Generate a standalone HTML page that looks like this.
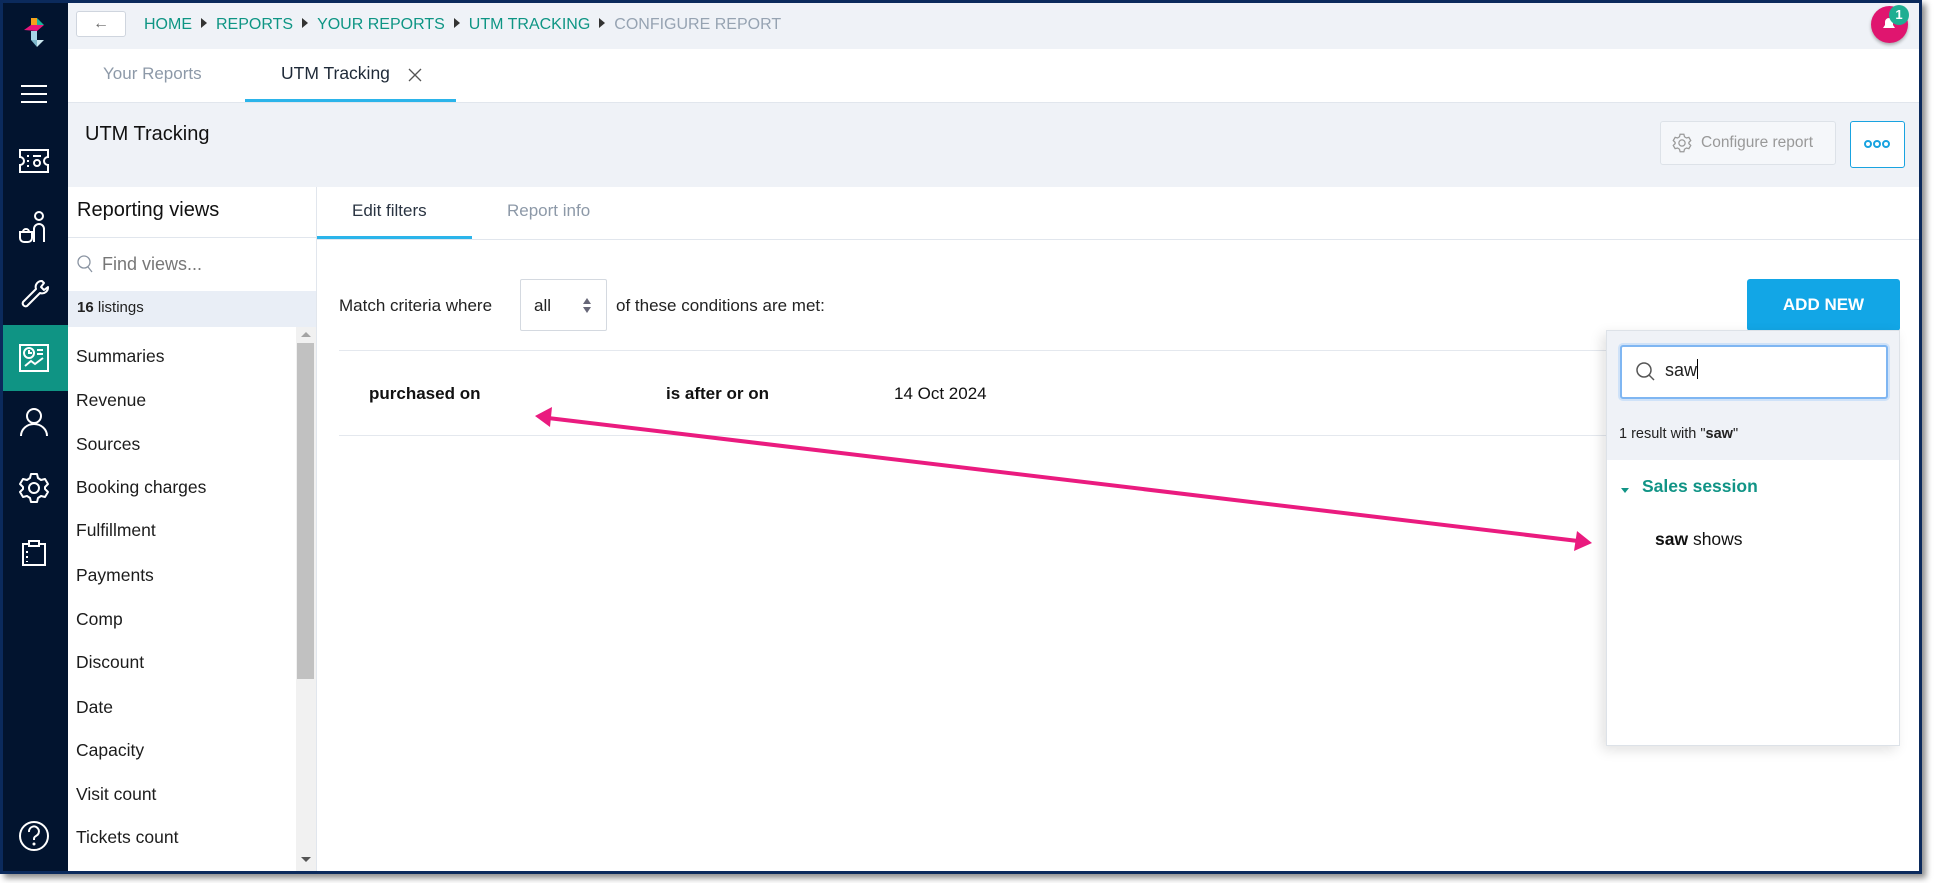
<!DOCTYPE html>
<html><head><meta charset="utf-8">
<style>
*{box-sizing:border-box;margin:0;padding:0}
body{width:1934px;height:883px;background:#fff;font-family:"Liberation Sans",sans-serif;position:relative;overflow:hidden;color:#1c1c1c}
.a{position:absolute}
.frame{left:0;top:0;width:1922px;height:874px;box-shadow:4px 4px 6px rgba(0,0,0,.45);overflow:hidden;background:#fff}
.bord{left:0;top:0;width:1922px;height:874px;border:3px solid #0b2a5c;pointer-events:none}
.side{left:0;top:0;width:68px;height:874px;background:#02142f}
.ic{position:absolute;left:0;width:68px;display:flex;justify-content:center;align-items:center}
.bc{left:68px;top:0;width:1860px;height:49px;background:#eff2f7}
.crumb{font-size:16px;color:#0e9584;top:16px}
.tri{display:inline-block;width:0;height:0;border-left:6px solid #333;border-top:5px solid transparent;border-bottom:5px solid transparent;margin:0 9px 1px}
.list div{position:absolute;left:76px;font-size:17.5px;color:#1c1c1c}
</style></head><body>
<div class="a frame">
<div class="a side">
  <svg class="a" style="left:22px;top:16px" width="24" height="32" viewBox="0 0 24 32">
    <polygon points="9,2 15,2 15,9 9,9" fill="#f6a21b"/><polygon points="15,2 22,9 15,9" fill="#17b79b"/>
    <polygon points="2,14 9,9 22,9 15,15" fill="#e8157a"/><polygon points="9,15 15,15 15,24 9,24" fill="#a7d3e6"/>
    <polygon points="15,24 22,24 15,31" fill="#cce8f0"/><polygon points="9,24 15,24 15,31" fill="#7fb9cc"/>
  </svg>
  <div class="ic" style="top:83px;height:22px"><svg width="28" height="20"><path d="M1 2h26M1 10h26M1 18h26" stroke="#fff" stroke-width="2"/></svg></div>
  <div class="ic" style="top:147px;height:28px"><svg width="32" height="26"><path d="M2 2h28v7a4 4 0 0 0 0 8v7H2v-7a4 4 0 0 0 0-8z" fill="none" stroke="#fff" stroke-width="2"/><path d="M10 7v2M10 12v2M10 17v2M15 8h8" stroke="#fff" stroke-width="2"/><circle cx="19" cy="15" r="3" fill="none" stroke="#fff" stroke-width="2"/></svg></div>
  <div class="ic" style="top:210px;height:34px"><svg width="32" height="34"><circle cx="21" cy="6" r="4" fill="none" stroke="#fff" stroke-width="2"/><path d="M16 32V19a5 5 0 0 1 10 0v13M2 22h12v6a4 4 0 0 1-4 4H6a4 4 0 0 1-4-4zM5 22a3 3 0 0 1 6 0" fill="none" stroke="#fff" stroke-width="2"/></svg></div>
  <div class="ic" style="top:278px;height:32px"><svg width="32" height="32"><path d="M24 3a6 6 0 0 0-6 8L5 24a3 3 0 0 0 4 4l13-13a6 6 0 0 0 8-6l-4 3-3-3 3-4z" fill="none" stroke="#fff" stroke-width="2" stroke-linejoin="round"/></svg></div>
  <div class="ic" style="top:325px;height:66px;background:#0f9484"><svg width="32" height="28"><rect x="2" y="1" width="28" height="26" fill="none" stroke="#fff" stroke-width="2"/><circle cx="11" cy="9" r="5" fill="none" stroke="#fff" stroke-width="2"/><path d="M11 6v3h3M19 6h6M19 10h6M7 22l6-5 4 3 8-6" fill="none" stroke="#fff" stroke-width="2"/></svg></div>
  <div class="ic" style="top:406px;height:32px"><svg width="30" height="30"><circle cx="15" cy="9" r="7" fill="none" stroke="#fff" stroke-width="2"/><path d="M2 29a13 12 0 0 1 26 0" fill="none" stroke="#fff" stroke-width="2"/></svg></div>
  <div class="ic" style="top:472px;height:32px"><svg width="32" height="32" viewBox="0 0 32 32"><path d="M13 2h6l1 4 3 2 4-1 3 5-3 3v2l3 3-3 5-4-1-3 2-1 4h-6l-1-4-3-2-4 1-3-5 3-3v-2L2 12l3-5 4 1 3-2z" fill="none" stroke="#fff" stroke-width="2" stroke-linejoin="round"/><circle cx="16" cy="16" r="5" fill="none" stroke="#fff" stroke-width="2"/></svg></div>
  <div class="ic" style="top:538px;height:30px"><svg width="26" height="26"><rect x="2" y="4" width="22" height="21" fill="none" stroke="#fff" stroke-width="2"/><rect x="8" y="1" width="10" height="5" fill="#02142f" stroke="#fff" stroke-width="2"/><path d="M6 11v2M6 16v2M6 21v1" stroke="#fff" stroke-width="2"/></svg></div>
  <div class="ic" style="top:820px;height:32px"><svg width="32" height="32"><circle cx="16" cy="16" r="14" fill="none" stroke="#fff" stroke-width="2"/><path d="M11 12a5 5 0 1 1 7 4c-2 1-2 2-2 4" fill="none" stroke="#fff" stroke-width="2"/><circle cx="16" cy="24" r="1.5" fill="#fff"/></svg></div>
</div>
<div class="a bc"></div>
<div class="a" style="left:76px;top:11px;width:50px;height:26px;border:1px solid #cfd5de;border-radius:3px;background:#fff;text-align:center;color:#666;font-size:16px;line-height:23px">&#8592;</div>
<div class="a crumb" style="left:144px">HOME<span class="tri"></span>REPORTS<span class="tri"></span>YOUR REPORTS<span class="tri"></span>UTM TRACKING<span class="tri"></span><span style="color:#96a3b2">CONFIGURE REPORT</span></div>
<div class="a" style="left:1871px;top:6px;width:37px;height:37px;border-radius:50%;background:#e0156f;box-shadow:0 2px 3px rgba(0,0,0,.3)"></div>
<svg class="a" style="left:1880px;top:14px" width="18" height="20"><path d="M3 14h12l-2-3V8a4 4 0 0 0-8 0v3z" fill="#fff"/></svg>
<div class="a" style="left:1889px;top:5px;width:20px;height:20px;border-radius:50%;background:#1fae92;color:#fff;font-size:13px;font-weight:bold;text-align:center;line-height:20px">1</div>
<div class="a" style="left:103px;top:64px;font-size:17px;color:#8d99a8">Your Reports</div>
<div class="a" style="left:281px;top:63px;font-size:17.5px;color:#1f2a38">UTM Tracking</div>
<svg class="a" style="left:408px;top:68px" width="14" height="14"><path d="M1 1l12 12M13 1L1 13" stroke="#555" stroke-width="1.3"/></svg>
<div class="a" style="left:245px;top:99px;width:211px;height:3px;background:#2bb4ea"></div>
<div class="a" style="left:68px;top:102px;width:1860px;height:1px;background:#e1e6ed"></div>
<div class="a" style="left:68px;top:103px;width:1860px;height:84px;background:#eff2f7"></div>
<div class="a" style="left:85px;top:123px;font-size:20px;color:#111">UTM Tracking</div>
<div class="a" style="left:1660px;top:121px;width:176px;height:44px;border:1px solid #dde2e8;border-radius:3px;background:#f5f7fa;color:#999;font-size:15.5px;line-height:42px;padding-left:40px">Configure report</div>
<svg class="a" style="left:1672px;top:133px" width="20" height="20" viewBox="0 0 32 32"><path d="M13 2h6l1 4 3 2 4-1 3 5-3 3v2l3 3-3 5-4-1-3 2-1 4h-6l-1-4-3-2-4 1-3-5 3-3v-2L2 12l3-5 4 1 3-2z" fill="none" stroke="#999" stroke-width="2"/><circle cx="16" cy="16" r="5" fill="none" stroke="#999" stroke-width="2"/></svg>
<div class="a" style="left:1850px;top:121px;width:55px;height:47px;border:1px solid #19a3e0;border-radius:3px;background:#fff"></div>
<svg class="a" style="left:1863px;top:139px" width="28" height="10"><circle cx="5" cy="5" r="3" fill="none" stroke="#19a3e0" stroke-width="2"/><circle cx="14" cy="5" r="3" fill="none" stroke="#19a3e0" stroke-width="2"/><circle cx="23" cy="5" r="3" fill="none" stroke="#19a3e0" stroke-width="2"/></svg>
<div class="a" style="left:77px;top:199px;font-size:20px;color:#111">Reporting views</div>
<div class="a" style="left:68px;top:237px;width:248px;height:1px;background:#e1e6ed"></div>
<svg class="a" style="left:76px;top:254px" width="18" height="20"><circle cx="8" cy="8" r="6" fill="none" stroke="#8a94a2" stroke-width="1.3"/><path d="M12 13l4 5" stroke="#8a94a2" stroke-width="1.3"/></svg>
<div class="a" style="left:102px;top:254px;font-size:18px;color:#777">Find views...</div>
<div class="a" style="left:68px;top:291px;width:248px;height:36px;background:#e9eef6"></div>
<div class="a" style="left:77px;top:299px;font-size:15px;color:#222"><b>16</b> listings</div>
<div class="a" style="left:316px;top:187px;width:1px;height:690px;background:#e1e6ed"></div>
<div class="a" style="left:296px;top:327px;width:20px;height:550px;background:#f1f1f1"></div>
<div class="a" style="left:297px;top:343px;width:17px;height:336px;background:#c1c1c1"></div>
<div class="a" style="left:301px;top:332px;width:0;height:0;border-left:5px solid transparent;border-right:5px solid transparent;border-bottom:5px solid #a3a3a3"></div>
<div class="a" style="left:301px;top:857px;width:0;height:0;border-left:5px solid transparent;border-right:5px solid transparent;border-top:5px solid #555"></div>
<div class="list">
<div style="top:346px">Summaries</div><div style="top:390px">Revenue</div><div style="top:434px">Sources</div><div style="top:477px">Booking charges</div><div style="top:520px">Fulfillment</div><div style="top:565px">Payments</div><div style="top:609px">Comp</div><div style="top:652px">Discount</div><div style="top:697px">Date</div><div style="top:740px">Capacity</div><div style="top:784px">Visit count</div><div style="top:827px">Tickets count</div>
</div>
<div class="a" style="left:352px;top:201px;font-size:17px;color:#2a3442">Edit filters</div>
<div class="a" style="left:507px;top:201px;font-size:17px;color:#8d99a8">Report info</div>
<div class="a" style="left:317px;top:236px;width:155px;height:3px;background:#2bb4ea"></div>
<div class="a" style="left:317px;top:239px;width:1609px;height:1px;background:#e1e6ed"></div>
<div class="a" style="left:339px;top:296px;font-size:17px;color:#222">Match criteria where</div>
<div class="a" style="left:520px;top:279px;width:87px;height:52px;border:1px solid #d4d9e0;border-radius:2px"></div>
<div class="a" style="left:534px;top:296px;font-size:17px;color:#222">all</div>
<div class="a" style="left:583px;top:298px;width:0;height:0;border-left:4px solid transparent;border-right:4px solid transparent;border-bottom:6px solid #667"></div>
<div class="a" style="left:583px;top:307px;width:0;height:0;border-left:4px solid transparent;border-right:4px solid transparent;border-top:6px solid #667"></div>
<div class="a" style="left:616px;top:296px;font-size:17px;color:#222">of these conditions are met:</div>
<div class="a" style="left:1747px;top:279px;width:153px;height:52px;background:#12a6e6;border-radius:3px;color:#fff;font-weight:bold;font-size:17px;text-align:center;line-height:52px">ADD NEW</div>
<div class="a" style="left:339px;top:350px;width:1270px;height:1px;background:#e4e8ee"></div>
<div class="a" style="left:369px;top:384px;font-size:17px;font-weight:bold;color:#111">purchased on</div>
<div class="a" style="left:666px;top:384px;font-size:17px;font-weight:bold;color:#111">is after or on</div>
<div class="a" style="left:894px;top:384px;font-size:17px;color:#111">14 Oct 2024</div>
<div class="a" style="left:339px;top:435px;width:1270px;height:1px;background:#e4e8ee"></div>
<div class="a" style="left:1606px;top:330px;width:294px;height:416px;background:#fff;border:1px solid #dde2e8;box-shadow:-4px 4px 12px rgba(0,0,0,.12)">
  <div class="a" style="left:0;top:0;width:292px;height:129px;background:#eff2f7"></div>
  <div class="a" style="left:13px;top:14px;width:268px;height:54px;border:2px solid #7fb6f2;border-radius:3px;background:#fff;box-shadow:0 0 0 2px #cfe2f8"></div>
  <svg class="a" style="left:28px;top:30px" width="22" height="22"><circle cx="9" cy="9" r="7" fill="none" stroke="#555" stroke-width="1.5"/><path d="M14 14l5 5" stroke="#555" stroke-width="1.5"/></svg>
  <div class="a" style="left:58px;top:28px;font-size:18px;color:#222">saw<span style="display:inline-block;width:1px;height:20px;background:#000;vertical-align:-3px"></span></div>
  <div class="a" style="left:12px;top:95px;font-size:14.5px;color:#222">1 result with "<b>saw</b>"</div>
  <div class="a" style="left:14px;top:157px;width:0;height:0;border-left:4px solid transparent;border-right:4px solid transparent;border-top:5px solid #119486"></div>
  <div class="a" style="left:35px;top:145px;font-size:17.5px;font-weight:bold;color:#119486">Sales session</div>
  <div class="a" style="left:48px;top:198px;font-size:17.5px;color:#111"><b>saw</b> shows</div>
</div>
<svg class="a" style="left:0;top:0" width="1934" height="883"><line x1="548" y1="418" x2="1578" y2="541" stroke="#ea1b7f" stroke-width="4"/><polygon points="535,416 552,407 550,427" fill="#ea1b7f"/><polygon points="1592,543 1574,551 1577,531" fill="#ea1b7f"/></svg>
<div class="a bord"></div>
</div>
</body></html>
